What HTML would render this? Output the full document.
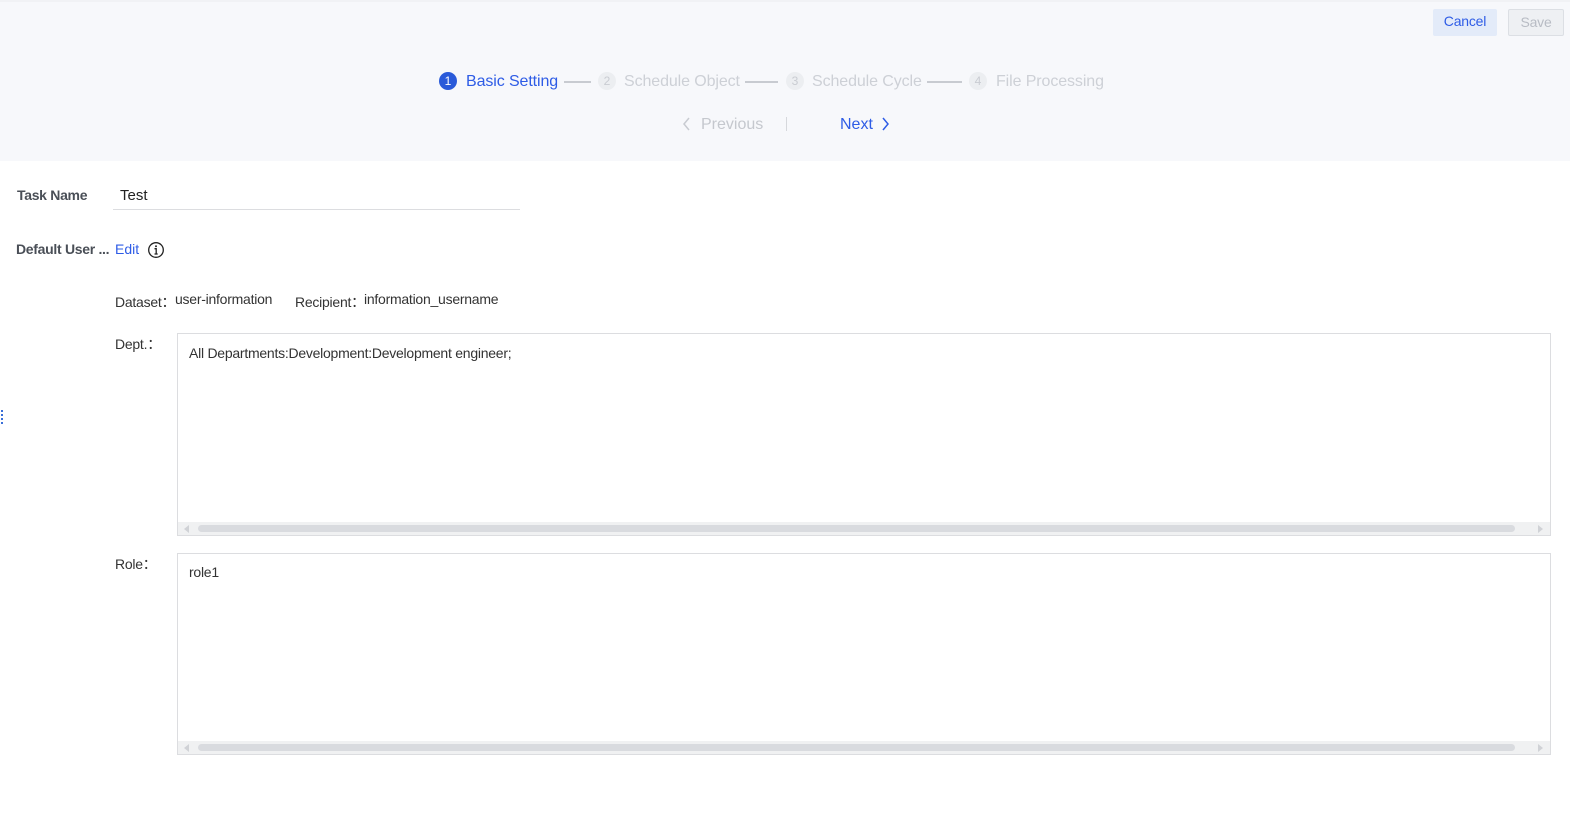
<!DOCTYPE html>
<html><head><style>
*{margin:0;padding:0;box-sizing:border-box}
body{width:1570px;height:826px;background:#fff;font-family:"Liberation Sans",sans-serif;position:relative;overflow:hidden;color:#222}
.a{position:absolute;white-space:nowrap}
.hdr{position:absolute;left:0;top:0;width:1570px;height:161px;background:#f7f8fb;border-top:2px solid #f1f2f5}
.btn{position:absolute;top:9px;height:27px;font-size:14px;line-height:25px;text-align:center;border-radius:2px;letter-spacing:-0.2px}
.circ{position:absolute;width:18px;height:18px;border-radius:50%;font-size:12px;line-height:18px;text-align:center;top:72px}
.step{top:73px;font-size:16px;color:#cdd0d6;letter-spacing:-0.1px}
.line{position:absolute;top:81px;height:2px;background:#c8cbd1}
.box{position:absolute;left:177px;width:1374px;border:1px solid #dcdde0;background:#fff}
.sb{position:absolute;left:0;right:0;bottom:0;height:13px;background:#f0f1f2}
.th{position:absolute;left:20px;right:35px;top:3px;height:7px;border-radius:4px;background:#d9dbdf}
.lbl{font-size:14px;color:#333;letter-spacing:-0.25px}
</style></head><body>
<div class="hdr"></div>
<div class="btn" style="left:1433px;width:64px;background:#e3ebf9;color:#2e5ce6">Cancel</div>
<div class="btn" style="left:1508px;width:56px;background:#eef0f3;border:1px solid #dcdfe4;color:#b8bcc4">Save</div>

<div class="circ" style="left:439px;background:#2a5ad9;color:#fff">1</div>
<div class="a step" style="left:466px;color:#2e5ce6">Basic Setting</div>
<div class="line" style="left:564px;width:27px"></div>
<div class="circ" style="left:598px;background:#eceef1;color:#c9ccd2">2</div>
<div class="a step" style="left:624px">Schedule Object</div>
<div class="line" style="left:745px;width:33px"></div>
<div class="circ" style="left:786px;background:#eceef1;color:#c9ccd2">3</div>
<div class="a step" style="left:812px">Schedule Cycle</div>
<div class="line" style="left:927px;width:35px"></div>
<div class="circ" style="left:969px;background:#eceef1;color:#c9ccd2">4</div>
<div class="a step" style="left:996px">File Processing</div>

<svg class="a" style="left:682px;top:117px" width="10" height="14"><path d="M7 1L2 7l5 6" fill="none" stroke="#c8cbd1" stroke-width="1.5"/></svg>
<div class="a" style="left:701px;top:116px;font-size:16px;color:#c5c8ce">Previous</div>
<div class="a" style="left:786px;top:117px;width:1px;height:14px;background:#d6d8dc"></div>
<div class="a" style="left:840px;top:116px;font-size:16px;color:#2e5ce6">Next</div>
<svg class="a" style="left:880px;top:117px" width="10" height="14"><path d="M3 1l5 6-5 6" fill="none" stroke="#2e5ce6" stroke-width="1.5"/></svg>

<div class="a" style="left:17px;top:187px;font-size:14px;font-weight:bold;color:#4a4f57;letter-spacing:-0.3px">Task Name</div>
<div class="a" style="left:120px;top:187px;font-size:15px;color:#222">Test</div>
<div class="a" style="left:113px;top:209px;width:407px;height:1px;background:#dcdde0"></div>

<div class="a" style="left:16px;top:241px;font-size:14px;font-weight:bold;color:#4a4f57;letter-spacing:-0.3px">Default User ...</div>
<div class="a" style="left:115px;top:241px;font-size:14px;color:#2e5ce6">Edit</div>
<svg class="a" style="left:147px;top:241px" width="18" height="18"><circle cx="9" cy="9" r="7.3" fill="none" stroke="#222" stroke-width="1.3"/><circle cx="9" cy="5.3" r="1" fill="#222"/><path d="M7.5 7.7H9.2V13M7.5 13h3.2" fill="none" stroke="#222" stroke-width="1.3"/></svg>

<div class="a lbl" style="left:115px;top:292px">Dataset：</div>
<div class="a lbl" style="left:175px;top:291px">user-information</div>
<div class="a lbl" style="left:295px;top:292px">Recipient：</div>
<div class="a lbl" style="left:364px;top:291px">information_username</div>

<div class="a lbl" style="left:115px;top:334px">Dept.：</div>
<div class="box" style="top:333px;height:203px">
<div class="a lbl" style="left:11px;top:11px">All Departments:Development:Development engineer;</div>
<div class="sb"><div class="th"></div>
<svg class="a" style="left:6px;top:3px" width="6" height="8"><path d="M5 0L0 4l5 4z" fill="#d0d2d6"/></svg>
<svg class="a" style="right:6px;top:3px" width="6" height="8"><path d="M0 0l5 4-5 4z" fill="#d0d2d6"/></svg></div>
</div>
<div class="a" style="left:1px;top:410px;width:2px;height:14px;border-left:2px dotted #3a6fd8"></div>

<div class="a lbl" style="left:115px;top:554px">Role：</div>
<div class="box" style="top:553px;height:202px">
<div class="a lbl" style="left:11px;top:10px">role1</div>
<div class="sb"><div class="th"></div>
<svg class="a" style="left:6px;top:3px" width="6" height="8"><path d="M5 0L0 4l5 4z" fill="#d0d2d6"/></svg>
<svg class="a" style="right:6px;top:3px" width="6" height="8"><path d="M0 0l5 4-5 4z" fill="#d0d2d6"/></svg></div>
</div>
</body></html>
